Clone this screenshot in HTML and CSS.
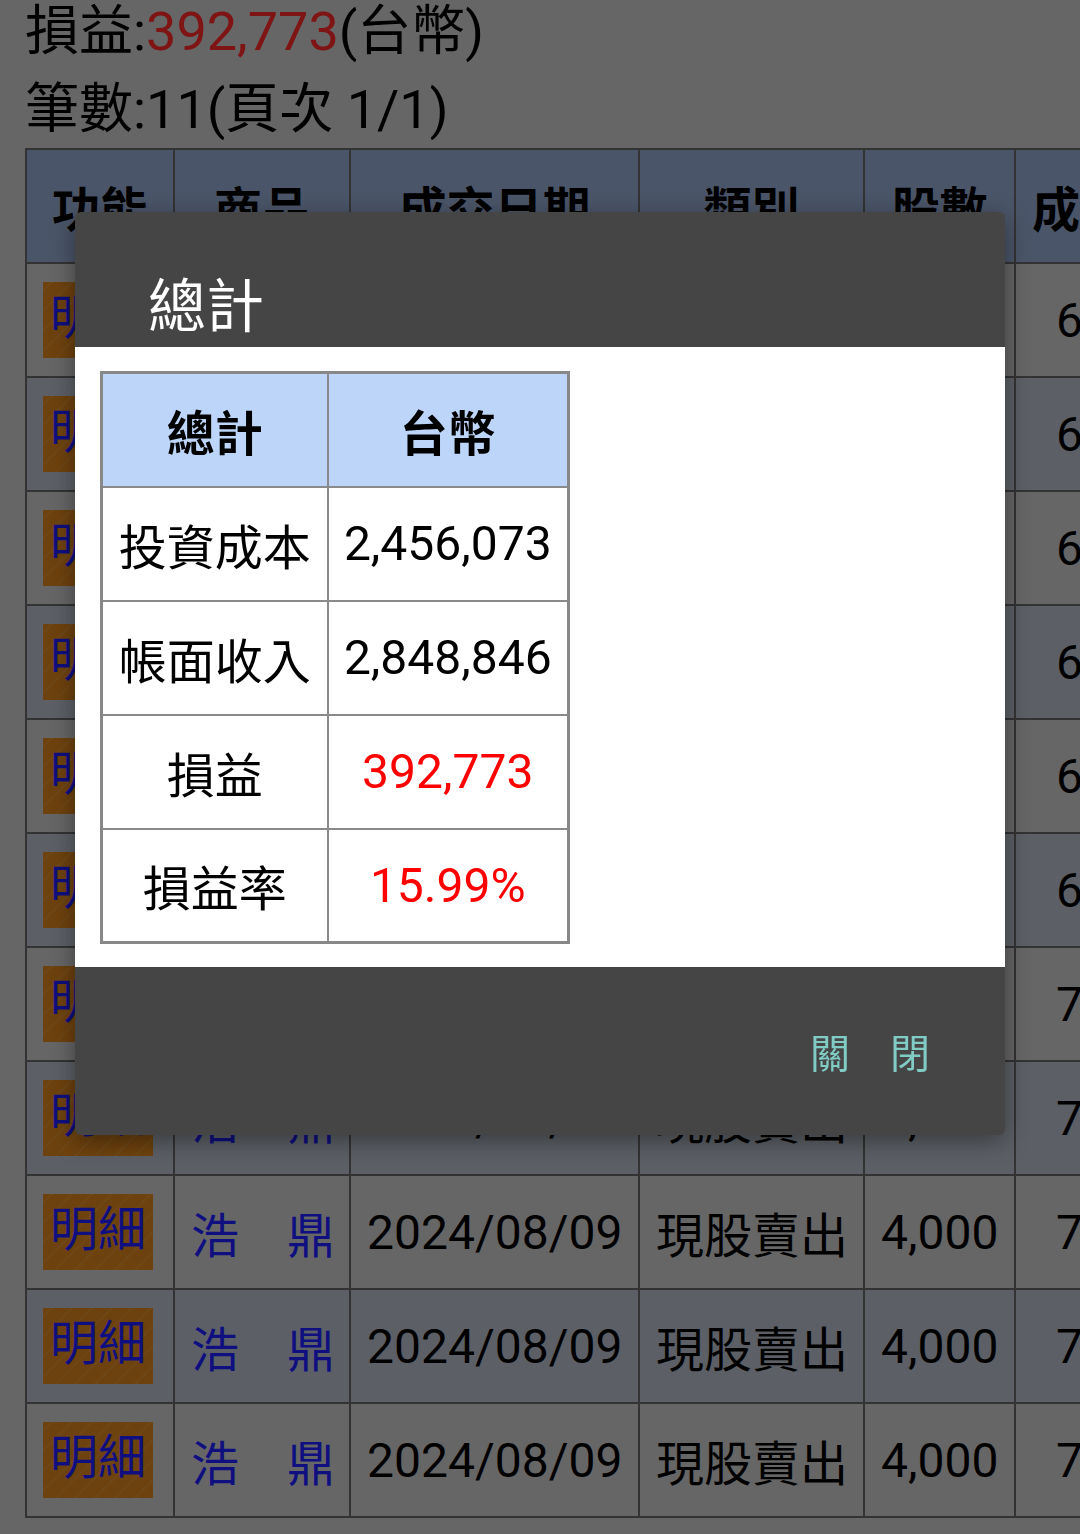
FILE: index.html
```html
<!DOCTYPE html>
<html lang="zh-Hant">
<head>
    <meta charset="UTF-8">
    <meta name="viewport" content="width=device-width, initial-scale=1.0">
    <title>已實現損益</title>
    <link rel="stylesheet" href="styles.css">
</head>
<body>
    <div class="page">
        <div class="summary">
            <div>損益:<span class="profit">392,773</span>(台幣)</div>
            <div>筆數:11(頁次 1/1)</div>
        </div>

        <table class="trade-table">
            <colgroup>
                <col class="c-func">
                <col class="c-prod">
                <col class="c-date">
                <col class="c-type">
                <col class="c-qty">
                <col class="c-price">
            </colgroup>
            <thead>
                <tr>
                    <th>功能</th>
                    <th>商品</th>
                    <th>成交日期</th>
                    <th>類別</th>
                    <th>股數</th>
                    <th class="price">成交價</th>
                </tr>
            </thead>
            <tbody>
                <tr><td><span class="detail-btn">明細</span></td><td class="prod">浩　鼎</td><td>2024/08/09</td><td>現股賣出</td><td>4,000</td><td class="price">65.80</td></tr>
                <tr><td><span class="detail-btn">明細</span></td><td class="prod">浩　鼎</td><td>2024/08/09</td><td>現股賣出</td><td>4,000</td><td class="price">66.20</td></tr>
                <tr><td><span class="detail-btn">明細</span></td><td class="prod">浩　鼎</td><td>2024/08/09</td><td>現股賣出</td><td>4,000</td><td class="price">66.90</td></tr>
                <tr><td><span class="detail-btn">明細</span></td><td class="prod">浩　鼎</td><td>2024/08/09</td><td>現股賣出</td><td>4,000</td><td class="price">67.40</td></tr>
                <tr><td><span class="detail-btn">明細</span></td><td class="prod">浩　鼎</td><td>2024/08/09</td><td>現股賣出</td><td>4,000</td><td class="price">68.10</td></tr>
                <tr><td><span class="detail-btn">明細</span></td><td class="prod">浩　鼎</td><td>2024/08/09</td><td>現股賣出</td><td>4,000</td><td class="price">69.50</td></tr>
                <tr><td><span class="detail-btn">明細</span></td><td class="prod">浩　鼎</td><td>2024/08/09</td><td>現股賣出</td><td>4,000</td><td class="price">70.20</td></tr>
                <tr><td><span class="detail-btn">明細</span></td><td class="prod">浩　鼎</td><td>2024/08/09</td><td>現股賣出</td><td>4,000</td><td class="price">70.80</td></tr>
                <tr><td><span class="detail-btn">明細</span></td><td class="prod">浩　鼎</td><td>2024/08/09</td><td>現股賣出</td><td>4,000</td><td class="price">71.30</td></tr>
                <tr><td><span class="detail-btn">明細</span></td><td class="prod">浩　鼎</td><td>2024/08/09</td><td>現股賣出</td><td>4,000</td><td class="price">71.90</td></tr>
                <tr><td><span class="detail-btn">明細</span></td><td class="prod">浩　鼎</td><td>2024/08/09</td><td>現股賣出</td><td>4,000</td><td class="price">72.40</td></tr>
            </tbody>
        </table>

        <p class="note">備註：損益僅供參考</p>
    </div>

    <!-- 對話框 -->
    <div class="mask"></div>
    <div class="dialog">
        <h2 class="dialog-title">總計</h2>
        <div class="dialog-body">
            <table class="total-table">
                <colgroup>
                    <col class="t-label">
                    <col class="t-value">
                </colgroup>
                <thead>
                    <tr>
                        <th>總計</th>
                        <th>台幣</th>
                    </tr>
                </thead>
                <tbody>
                    <tr><td>投資成本</td><td>2,456,073</td></tr>
                    <tr><td>帳面收入</td><td>2,848,846</td></tr>
                    <tr><td>損益</td><td class="red">392,773</td></tr>
                    <tr><td>損益率</td><td class="red">15.99%</td></tr>
                </tbody>
            </table>
        </div>
        <div class="dialog-footer">
            <button class="close-btn">關　閉</button>
        </div>
    </div>
</body>
</html>
```

FILE: styles.css
```css
html{
    font-family: Roboto, "Noto Sans CJK TC", sans-serif;
}

*,
*:before,
*:after{
    box-sizing: border-box;
}

body{
    margin: 0;
    padding: 0;
    background: #cccccc;
    overflow: hidden;
}

.page{
    padding: 0 25px;
    width: 1300px;
}

.summary{
    margin-top: -7px;
    font-size: 54px;
    line-height: 78px;
    color: #000;
}

.profit{
    color: #ff2828;
}

/* 成交明細 */
.trade-table{
    margin-top: -1px;
    border-collapse: collapse;
    table-layout: fixed;
    width: 1189px;
    font-size: 48px;
}

.c-func{ width: 148px; }
.c-prod{ width: 176px; }
.c-date{ width: 289px; }
.c-type{ width: 225px; }
.c-qty{ width: 151px; }
.c-price{ width: 200px; }

.trade-table th,
.trade-table td{
    border: 2px solid #666;
    height: 114px;
    padding: 0 16px;
    white-space: nowrap;
    overflow: hidden;
}

.trade-table th{
    background: #96aad2;
    font-weight: bold;
    text-align: center;
}

.trade-table th.price{
    text-align: left;
}

.trade-table td{
    text-align: left;
}

.trade-table td.price{
    padding-left: 40px;
}

.trade-table tbody tr:nth-child(even){
    background: #b8c0cc;
}

.prod{
    color: #1e1eff;
}

.detail-btn{
    display: inline-block;
    width: 110px;
    padding: 13px 0 18px;
    line-height: 45px;
    text-align: center;
    color: #1e1eff;
    background:
        repeating-linear-gradient(-45deg, rgba(255, 255, 255, 0) 0 12px, rgba(255, 255, 255, .08) 12px 14px),
        #dc851c;
}

.note{
    margin: 4px 0 0;
    font-size: 40px;
    color: #ff2828;
}

/* 對話框 */
.mask{
    position: fixed;
    top: 0;
    left: 0;
    right: 0;
    bottom: 0;
    background: rgba(0, 0, 0, .5);
}

.dialog{
    position: fixed;
    top: 212px;
    left: 75px;
    width: 930px;
    background: #454545;
    border-radius: 6px;
    overflow: hidden;
    box-shadow: 0 6px 24px rgba(0, 0, 0, .4);
}

.dialog-title{
    margin: 0;
    height: 135px;
    padding: 55px 0 0 73px;
    font-size: 58px;
    font-weight: normal;
    line-height: 81px;
    color: #fff;
}

.dialog-body{
    background: #fff;
    padding: 24px 25px 23px;
}

.total-table{
    border-collapse: collapse;
    table-layout: fixed;
    width: 467px;
    font-size: 48px;
    border: 3px solid #888;
}

.t-label{ width: 226px; }
.t-value{ width: 241px; }

.total-table th,
.total-table td{
    border: 2px solid #8a8a8a;
    height: 114px;
    padding: 0;
    text-align: center;
    color: #000;
    white-space: nowrap;
}

.total-table th{
    background: #bed5fa;
    font-weight: bold;
}

.total-table td.red{
    color: #ff0000;
}

.dialog-footer{
    height: 168px;
    display: flex;
    justify-content: flex-end;
    align-items: center;
    padding: 0 75px 0 0;
}

.close-btn{
    background: none;
    border: none;
    padding: 0;
    font-family: inherit;
    font-size: 40px;
    color: #80cbc4;
    cursor: pointer;
}
```
